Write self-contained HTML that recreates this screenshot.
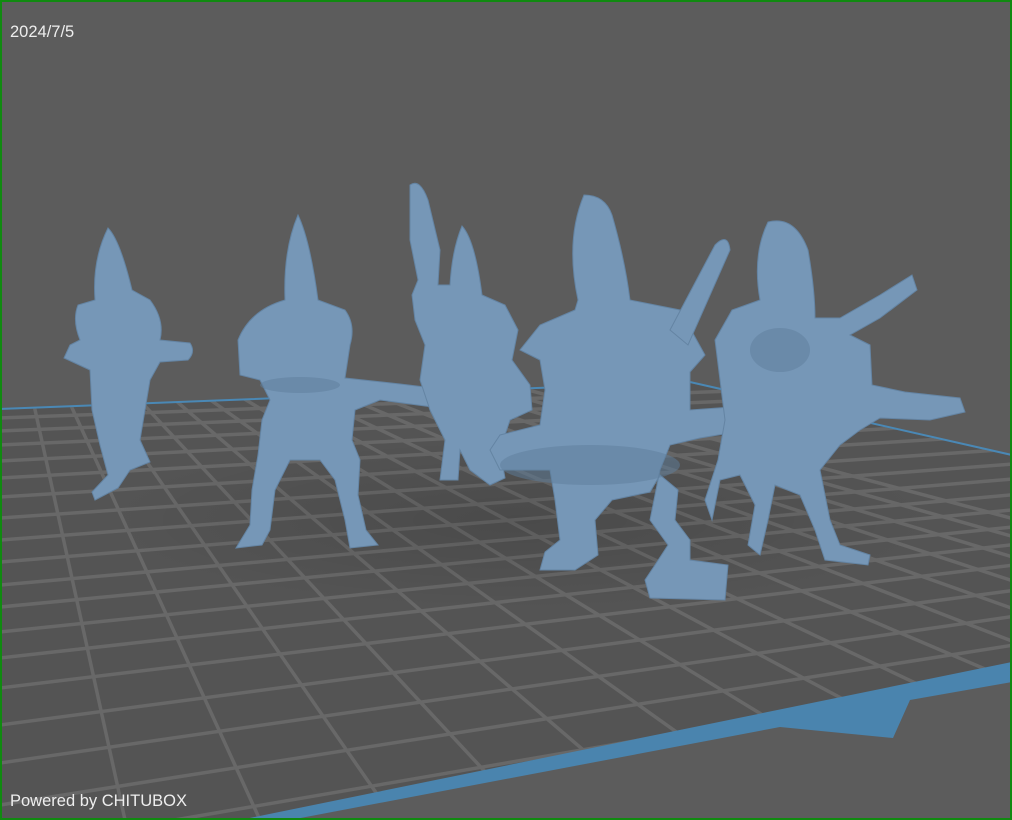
<!DOCTYPE html>
<html><head><meta charset="utf-8"><style>
html,body{margin:0;padding:0;background:#5b5b5b;width:1012px;height:820px;overflow:hidden;}
#w{position:relative;width:1012px;height:820px;overflow:hidden;background:#5c5c5c;box-sizing:border-box;border:2px solid #108a10;}
svg{position:absolute;left:-2px;top:-2px;display:block;}
.t{position:absolute;color:#eee;font-family:"Liberation Sans",sans-serif;font-size:16.5px;line-height:18px;}
</style></head><body><div id="w">
<svg id="s" width="1012" height="820" viewBox="0 0 1012 820">
<defs><clipPath id="fc"><polygon points="0,410 690,383 1012,456 1012,668 240,820 0,820"/></clipPath>
<radialGradient id="sh" cx="0.5" cy="0.5" r="0.5"><stop offset="0" stop-color="#000" stop-opacity="0.12"/><stop offset="1" stop-color="#000" stop-opacity="0"/></radialGradient></defs>
<polygon points="0,410 690,383 1012,456 1012,668 240,820 0,820" fill="#545454"/>
<g id="grid" clip-path="url(#fc)" stroke="#686868" stroke-width="3.5"></g>
<ellipse cx="520" cy="520" rx="420" ry="90" fill="url(#sh)"/>
<polyline points="0,409 690,382 1012,455" fill="none" stroke="#4a88b5" stroke-width="2"/>
<polygon points="240,820 1012,662 1012,682 910,700 893,738 780,727 290,820" fill="#4a84ae"/>
<g fill="#7697b7" stroke="#6484a3" stroke-width="1">
<path d="M95,300 Q92,260 108,228 Q120,240 132,290 L150,300 Q165,320 160,340 L190,343 Q196,352 188,360 L160,362 L150,380 Q145,410 140,440 L150,462 L130,470 L118,488 L95,500 L92,492 L108,475 L100,445 L92,410 L90,370 L64,358 L70,345 L80,340 Q72,320 78,305 Z"/>
<path d="M285,300 Q283,250 298,215 Q310,240 318,300 L345,310 Q356,325 350,345 L345,378 L400,384 L450,390 L495,395 L498,410 L440,408 L380,400 L355,410 L352,440 L360,460 L358,495 L366,530 L378,545 L350,548 L345,520 L335,480 L320,460 L290,460 L275,490 L270,530 L262,545 L236,548 L250,525 L252,490 L258,455 L262,420 L270,400 L260,380 L240,375 L238,340 Q250,310 285,300 Z"/>
<path d="M410,185 Q420,178 428,200 L440,250 L438,285 L450,285 Q452,250 462,226 Q475,240 482,295 L505,305 L518,330 L512,360 L530,385 L532,410 L510,420 L500,450 L505,478 L490,485 L470,470 L460,450 L458,480 L440,480 L445,440 L430,410 L420,380 L425,345 L415,320 L412,295 L418,280 L410,240 Z"/>
<path d="M578,300 Q565,240 584,195 Q605,195 612,215 Q625,260 630,300 L680,310 L705,355 L690,372 L690,410 L760,405 L860,400 L890,397 L895,415 L760,428 L700,438 L670,445 L660,470 L650,520 L668,545 L655,565 L645,580 L650,598 L725,600 L728,565 L690,560 L690,540 L675,520 L678,490 L660,475 L650,492 L612,500 L595,520 L598,555 L575,570 L540,570 L545,552 L560,540 L555,500 L550,470 L500,470 L490,450 L500,435 L540,425 L545,390 L540,360 L520,350 L540,325 L575,310 Z"/>
<path d="M670,330 L715,245 Q728,232 730,250 L688,345 Z"/>
<path d="M760,300 Q752,255 768,222 Q795,215 808,250 Q815,290 815,318 L840,318 L880,295 L912,275 L917,290 L880,318 L850,335 L870,345 L872,385 L905,392 L960,398 L965,412 L930,420 L880,418 L860,430 L840,445 L820,470 L830,520 L840,545 L870,555 L868,565 L825,560 L815,530 L800,495 L775,485 L768,520 L760,555 L748,545 L755,505 L740,475 L720,480 L712,520 L705,500 L718,460 L725,420 L720,380 L715,340 L732,310 Z"/>
</g>
<g fill="#5e7e9c" opacity="0.5">
<ellipse cx="590" cy="465" rx="90" ry="20"/>
<ellipse cx="300" cy="385" rx="40" ry="8"/>
<ellipse cx="780" cy="350" rx="30" ry="22"/>
</g>
</svg>
<div class="t" style="left:8px;top:21px;">2024/7/5</div>
<div class="t" style="left:8px;top:790px;">Powered by CHITUBOX</div>
</div>
<script>
var g=document.getElementById('grid'),ns='http://www.w3.org/2000/svg';
function ln(x1,y1,x2,y2){var l=document.createElementNS(ns,'line');l.setAttribute('x1',x1);l.setAttribute('y1',y1);l.setAttribute('x2',x2);l.setAttribute('y2',y2);g.appendChild(l);}
var A=[3200,300];
[418,431,445,461,478,497,518,540,562,585,607,632,658,688,725,763,805,850].forEach(function(y){var dx=A[0],dy=A[1]-y;var t=-0.2;ln(0+t*dx,y+t*dy,A[0],A[1]);});
var B=[0,250];
for(var k=-2;k<16;k++){var x=125+135*k;ln(B[0],B[1],B[0]+(x-B[0])*2,B[1]+(820-B[1])*2);}
</script>
</body></html>
